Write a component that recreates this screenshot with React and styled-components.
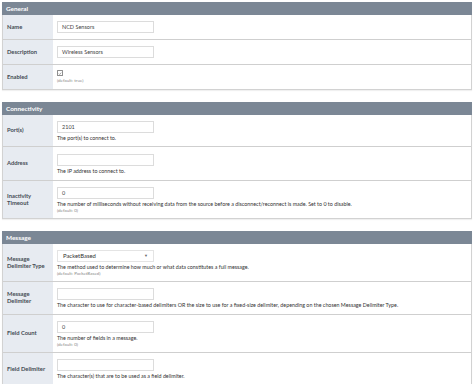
import React from 'react'
import styled, { createGlobalStyle } from 'styled-components'

const GlobalStyle = createGlobalStyle`
  html, body {
    margin: 0;
    padding: 0;
    background: #ffffff;
  }
  body {
    font-family: Lato, "Open Sans", "Liberation Sans", sans-serif;
    color: #333;
  }
`

const Page = styled.div`
  width: 470px;
  padding: 2px 2px 0 2px;
  display: flex;
  flex-direction: column;
  gap: 12px;
`

const Panel = styled.section`
  border: 1px solid #d2d2d2;
  border-top: none;
  box-shadow: 0 1px 1px rgba(0, 0, 0, 0.06);
  background: #fff;
`

const PanelHeader = styled.div`
  height: 13px;
  line-height: 13px;
  background: #7b8795;
  color: #fff;
  font-weight: 700;
  font-size: 6.4px;
  padding-left: 4px;
  margin: 0 -1px;
`

const Row = styled.div`
  display: grid;
  grid-template-columns: 50px 1fr;
  border-top: ${p => (p.first ? 'none' : '1px solid #cfcfcf')};
`

const Label = styled.div`
  background: #e7ebf1;
  display: flex;
  align-items: center;
  padding: 0 3px 0 4px;
  font-size: 5.8px;
  line-height: 6.8px;
  font-weight: 700;
  color: #454b54;
`

const Value = styled.div`
  padding: ${p => p.pad || '6px 4px 6px 4px'};
  display: flex;
  flex-direction: column;
  align-items: flex-start;
`

const Input = styled.div`
  box-sizing: border-box;
  width: 97px;
  height: 12px;
  border: 1px solid #dcdcdc;
  background: #fff;
  font-size: 5.5px;
  line-height: 10px;
  padding-left: 4px;
  color: #444;
`

const Select = styled(Input)`
  display: flex;
  justify-content: space-between;
  align-items: center;
  padding: 0 5px 0 5px;
  font-size: 5.9px;
  color: #333;
  border-color: #e4e4e4;
`

const Caret = styled.span`
  font-size: 4px;
  color: #666;
`

const Desc = styled.div`
  margin-top: 2px;
  font-size: 5.35px;
  line-height: 7px;
  color: #333;
  white-space: nowrap;
`

const Default = styled.div`
  font-size: 4.5px;
  line-height: 6px;
  color: #8a8a8a;
  white-space: nowrap;
`

const Check = styled.div`
  box-sizing: border-box;
  width: 6px;
  height: 6px;
  border: 0.7px solid #8f8f8f;
  border-radius: 0.5px;
  margin-top: -1px;
  display: flex;
  align-items: center;
  justify-content: center;
  svg {
    display: block;
  }
`

const Field = ({ label, first, value, desc, def, select, pad }) => (
  <Row first={first}>
    <Label>{label}</Label>
    <Value pad={pad}>
      {select ? (
        <Select>
          <span>{value}</span>
          <Caret>▼</Caret>
        </Select>
      ) : (
        <Input>{value}</Input>
      )}
      {desc && <Desc>{desc}</Desc>}
      {def && <Default>{def}</Default>}
    </Value>
  </Row>
)

export default function App() {
  return (
    <>
      <GlobalStyle />
      <Page>
        <Panel>
          <PanelHeader>General</PanelHeader>
          <Field first label="Name" value="NCD Sensors" />
          <Field label="Description" value="Wireless Sensors" />
          <Row>
            <Label>Enabled</Label>
            <Value pad="6px 4px 5px 4px">
              <Check>
                <svg width="5" height="5" viewBox="0 0 10 10">
                  <path d="M2 5.2 L4.2 7.4 L8.2 2.6" fill="none" stroke="#666" strokeWidth="1.4" />
                </svg>
              </Check>
              <Default style={{ marginTop: '2px' }}>(default: true)</Default>
            </Value>
          </Row>
        </Panel>

        <Panel>
          <PanelHeader>Connectivity</PanelHeader>
          <Field first label="Port(s)" value="2101" desc="The port(s) to connect to." pad="6px 4px 4px 4px" />
          <Field label="Address" value="" desc="The IP address to connect to." pad="7px 4px 5px 4px" />
          <Field
            label="Inactivity Timeout"
            value="0"
            desc="The number of milliseconds without receiving data from the source before a disconnect/reconnect is made. Set to 0 to disable."
            def="(default: 0)"
            pad="6px 4px 4px 4px"
          />
        </Panel>

        <Panel>
          <PanelHeader>Message</PanelHeader>
          <Field
            first
            select
            label="Message Delimiter Type"
            value="PacketBased"
            desc="The method used to determine how much or what data constitutes a full message."
            def="(default: PacketBased)"
            pad="6px 4px 4px 4px"
          />
          <Field
            label="Message Delimiter"
            value=""
            desc="The character to use for character-based delimiters OR the size to use for a fixed-size delimiter, depending on the chosen Message Delimiter Type."
            pad="6px 4px 5px 4px"
          />
          <Field
            label="Field Count"
            value="0"
            desc="The number of fields in a message."
            def="(default: 0)"
            pad="6px 4px 4px 4px"
          />
          <Field
            label="Field Delimiter"
            value=""
            desc="The character(s) that are to be used as a field delimiter."
            pad="6px 4px 5px 4px"
          />
        </Panel>
      </Page>
    </>
  )
}
